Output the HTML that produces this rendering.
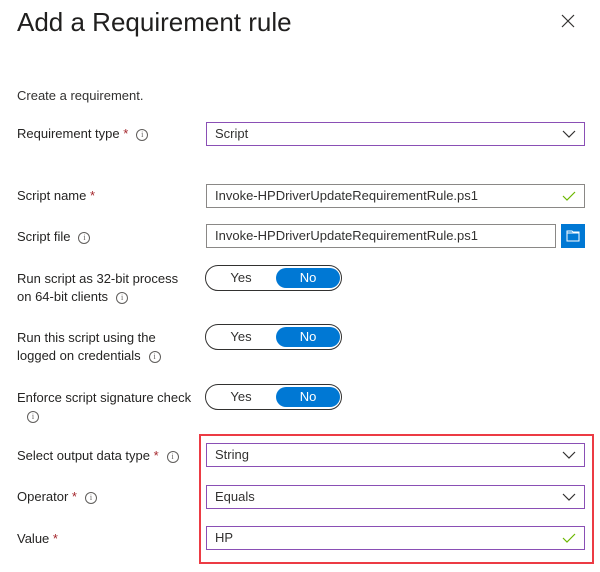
<!DOCTYPE html>
<html><head><style>
*{margin:0;padding:0;box-sizing:border-box}
body{width:600px;height:572px;background:#fff;position:relative;font-family:"Liberation Sans",sans-serif;color:#323130;overflow:hidden}
.a{position:absolute}
.t{font-size:13px;white-space:nowrap;color:#252423}
.st{color:#a4262c}
.i{display:inline-block;width:12px;height:12px;border:1px solid #605e5c;border-radius:50%;font-size:8px;line-height:10px;text-align:center;color:#605e5c;vertical-align:middle;margin-left:8px;font-family:"Liberation Serif",serif}
.in{position:absolute;left:206px;width:379px;height:24px;border:1px solid #8a8886;font-size:13px;line-height:22px;padding-left:8px;color:#323130}
.p{border:1.5px solid #8a4fb5}
.chev{position:absolute;right:8px;top:6px}
.tg{position:absolute;left:205px;width:137px;height:26px;border:1px solid #323130;border-radius:13px;font-size:13px}
.tg .y{position:absolute;left:0;width:70px;text-align:center;line-height:24px}
.tg .n{position:absolute;left:70px;top:2px;width:64px;height:20px;border-radius:10px;background:#0078d4;color:#fff;text-align:center;line-height:20px}
</style></head><body>
<div class="a" style="left:17px;top:7px;font-size:26px;color:#201f1e">Add a Requirement rule</div>
<svg class="a" style="left:561px;top:14px" width="14" height="14"><path d="M1 1L13 13M13 1L1 13" stroke="#323130" stroke-width="1.2"/></svg>
<div class="a t" style="left:17px;top:88px;color:#323130">Create a requirement.</div>

<div class="a t" style="left:17px;top:126px">Requirement type <span class="st">*</span><span class="i">i</span></div>
<div class="in p" style="top:122px">Script<svg class="chev" width="14" height="10"><path d="M1 2L7 8L13 2" stroke="#323130" fill="none" stroke-width="1.2"/></svg></div>

<div class="a t" style="left:17px;top:188px">Script name <span class="st">*</span></div>
<div class="in" style="top:184px">Invoke-HPDriverUpdateRequirementRule.ps1<svg class="chev" width="14" height="10"><path d="M1 5L5 9L13 1" stroke="#6bb700" fill="none" stroke-width="1.2"/></svg></div>

<div class="a t" style="left:17px;top:229px">Script file<span class="i">i</span></div>
<div class="in" style="top:224px;width:350px">Invoke-HPDriverUpdateRequirementRule.ps1</div>
<div class="a" style="left:561px;top:224px;width:24px;height:24px;background:#0078d4"><svg width="24" height="24"><path d="M6 9V17H18V8H12L11 7H6V9H18" stroke="#fff" fill="none" stroke-width="1"/></svg></div>

<div class="a t" style="left:17px;top:270px;line-height:18px">Run script as 32-bit process<br>on 64-bit clients<span class="i">i</span></div>
<div class="tg" style="top:265px"><div class="y">Yes</div><div class="n">No</div></div>

<div class="a t" style="left:17px;top:329px;line-height:18px">Run this script using the<br>logged on credentials<span class="i">i</span></div>
<div class="tg" style="top:324px"><div class="y">Yes</div><div class="n">No</div></div>

<div class="a t" style="left:17px;top:389px;line-height:18px">Enforce script signature check<br><span class="i" style="margin-left:10px">i</span></div>
<div class="tg" style="top:384px"><div class="y">Yes</div><div class="n">No</div></div>

<div class="a" style="left:199px;top:434px;width:395px;height:130px;border:2px solid #ec3b44"></div>

<div class="a t" style="left:17px;top:448px">Select output data type <span class="st">*</span><span class="i">i</span></div>
<div class="in p" style="top:443px">String<svg class="chev" width="14" height="10"><path d="M1 2L7 8L13 2" stroke="#323130" fill="none" stroke-width="1.2"/></svg></div>

<div class="a t" style="left:17px;top:489px">Operator <span class="st">*</span><span class="i">i</span></div>
<div class="in p" style="top:485px">Equals<svg class="chev" width="14" height="10"><path d="M1 2L7 8L13 2" stroke="#323130" fill="none" stroke-width="1.2"/></svg></div>

<div class="a t" style="left:17px;top:531px">Value <span class="st">*</span></div>
<div class="in p" style="top:526px">HP<svg class="chev" width="14" height="10"><path d="M1 5L5 9L13 1" stroke="#6bb700" fill="none" stroke-width="1.2"/></svg></div>
</body></html>
